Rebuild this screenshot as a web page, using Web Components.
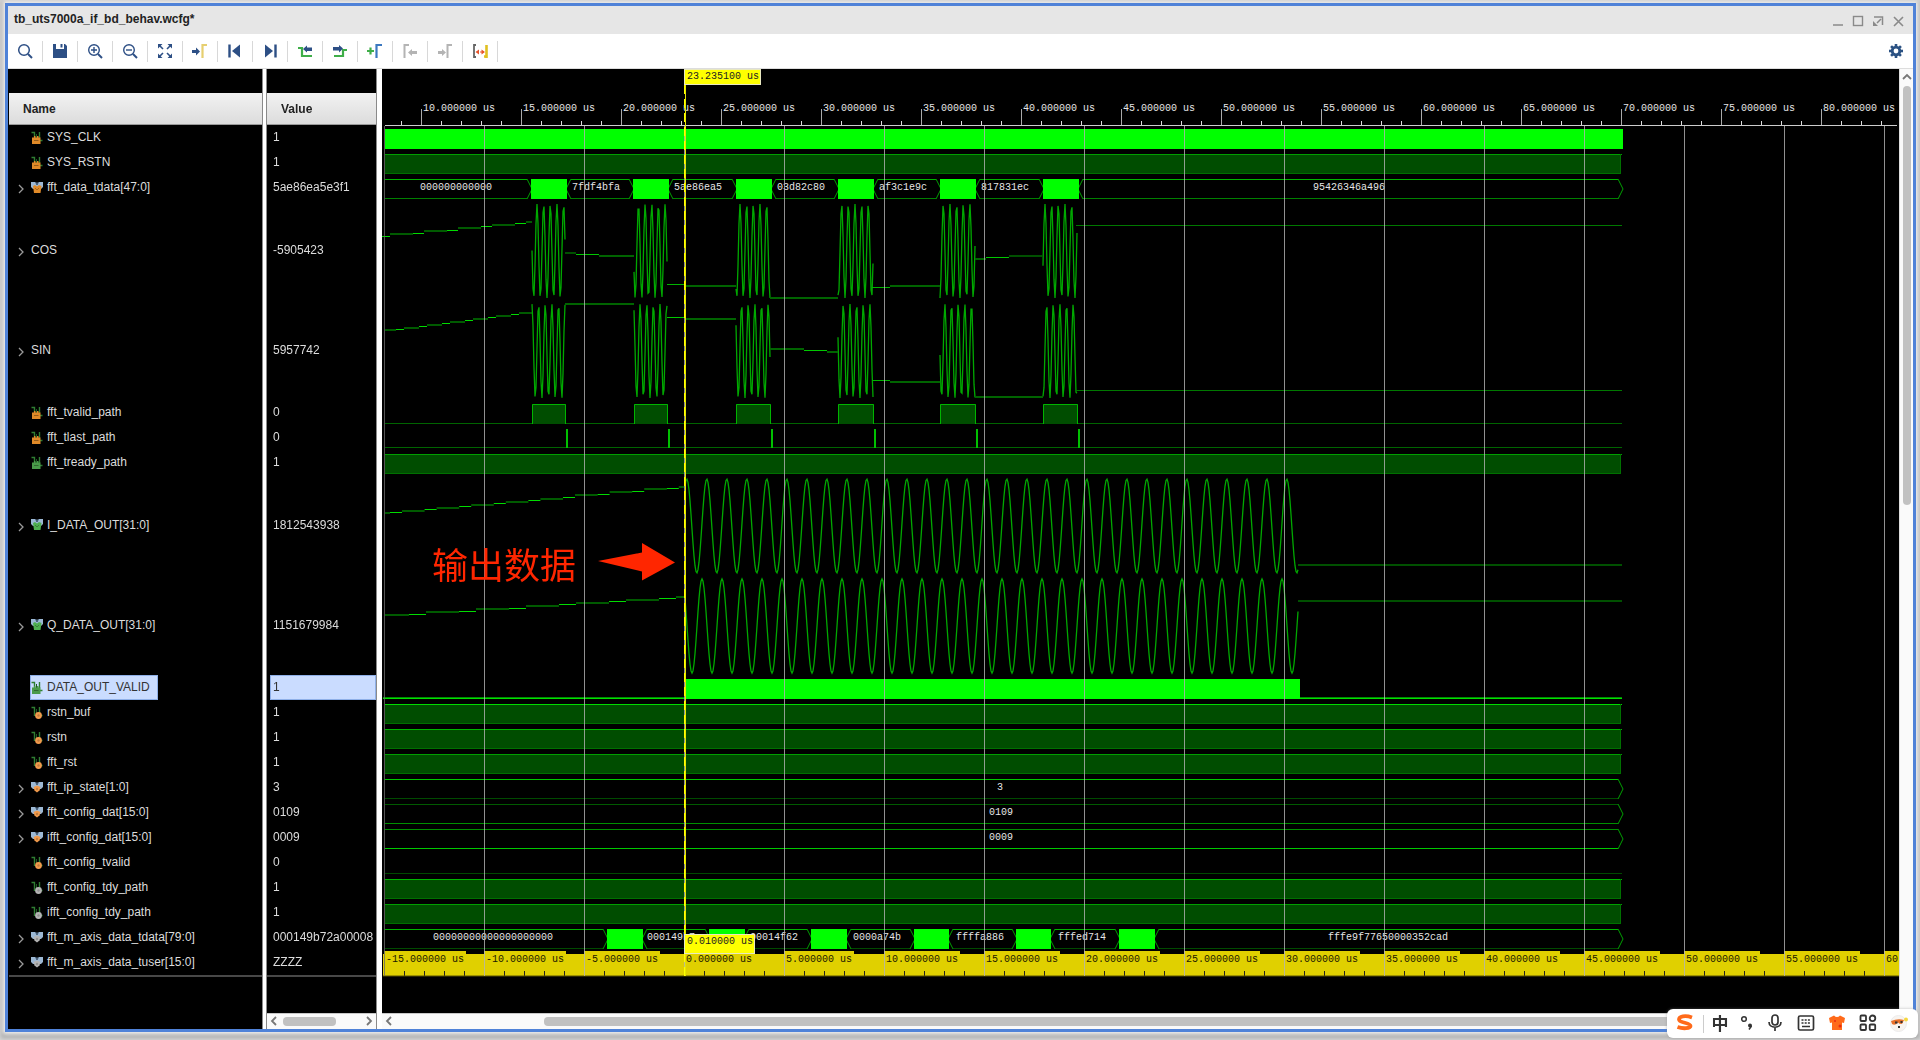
<!DOCTYPE html>
<html lang="en">
<head>
<meta charset="utf-8">
<title>tb_uts7000a_if_bd_behav.wcfg*</title>
<style>
html, body { height: 100%; margin: 0; }
body { background: #d4d4d4; font: 12px/16px "Liberation Sans", Arial, sans-serif; overflow: hidden; }
</style>
</head>
<body>
<wave-window caption="tb_uts7000a_if_bd_behav.wcfg*">
  <tool-bar slot="tools"></tool-bar>
  <signal-column slot="names" kind="name" heading="Name"></signal-column>
  <signal-column slot="values" kind="value" heading="Value"></signal-column>
  <wave-plot slot="plot"><span slot="note">输出数据</span></wave-plot>
</wave-window>
<ime-bar></ime-bar>

<script>
const SIGNALS = [
  { name: 'SYS_CLK', value: '1', icon: 's-lock', badge: '#e08a28', wave: 'clock' },
  { name: 'SYS_RSTN', value: '1', icon: 's-lock', badge: '#e08a28', wave: 'high', edge: '#00a000' },
  { name: 'fft_data_tdata[47:0]', value: '5ae86ea5e3f1', icon: 'b-lock', badge: '#e08a28', wave: 'bus',
    top: '#00b400', bottom: '#008000',
    blocks: [[531, 567], [633, 669], [736, 772], [838, 874], [940, 976], [1043, 1079]],
    labels: [[420, '000000000000'], [572, '7fdf4bfa'], [674, '5ae86ea5'], [777, '03d82c80'], [879, 'af3c1e9c'], [981, '817831ec'], [1313, '95426346a496']] },
  { name: 'COS', value: '-5905423', tall: true, wave: 'cos' },
  { name: 'SIN', value: '5957742', tall: true, wave: 'sin' },
  { name: 'fft_tvalid_path', value: '0', icon: 's-lock', badge: '#e08a28', wave: 'pulse' },
  { name: 'fft_tlast_path', value: '0', icon: 's-lock', badge: '#e08a28', wave: 'spike' },
  { name: 'fft_tready_path', value: '1', icon: 's-lock', badge: '#4a9a4a', wave: 'high', edge: '#00a000' },
  { name: 'I_DATA_OUT[31:0]', value: '1812543938', icon: 'b-lock', badge: '#4fae4f', tall: true, wave: 'idata' },
  { name: 'Q_DATA_OUT[31:0]', value: '1151679984', icon: 'b-lock', badge: '#4fae4f', tall: true, wave: 'qdata' },
  { name: 'DATA_OUT_VALID', value: '1', icon: 's-lock', badge: '#4a9a4a', selected: true, wave: 'valid' },
  { name: 'rstn_buf', value: '1', icon: 's-dot', badge: '#f09a4c', wave: 'high', edge: '#00dc00' },
  { name: 'rstn', value: '1', icon: 's-dot', badge: '#f09a4c', wave: 'high', edge: '#00b400' },
  { name: 'fft_rst', value: '1', icon: 's-dot', badge: '#f09a4c', wave: 'high', edge: '#00a000' },
  { name: 'fft_ip_state[1:0]', value: '3', icon: 'b-dot', badge: '#f09a4c', wave: 'bus', top: '#00c800', bottom: '#004a00', blocks: [], labels: [[997, '3']] },
  { name: 'fft_config_dat[15:0]', value: '0109', icon: 'b-dot', badge: '#f09a4c', wave: 'bus', top: '#005a00', bottom: '#009000', blocks: [], labels: [[989, '0109']] },
  { name: 'ifft_config_dat[15:0]', value: '0009', icon: 'b-dot', badge: '#f09a4c', wave: 'bus', top: '#009000', bottom: '#00c800', blocks: [], labels: [[989, '0009']] },
  { name: 'fft_config_tvalid', value: '0', icon: 's-dot', badge: '#f09a4c', wave: 'low' },
  { name: 'fft_config_tdy_path', value: '1', icon: 's-dot', badge: '#b4b4b4', wave: 'high', edge: '#00b400' },
  { name: 'ifft_config_tdy_path', value: '1', icon: 's-dot', badge: '#b4b4b4', wave: 'high', edge: '#00a000' },
  { name: 'fft_m_axis_data_tdata[79:0]', value: '000149b72a00008', icon: 'b-dot', badge: '#b4b4b4', wave: 'bus',
    top: '#00b400', bottom: '#004a00',
    blocks: [[607, 643], [709, 745], [811, 847], [914, 949], [1016, 1051], [1119, 1155]],
    labels: [[433, '00000000000000000000'], [647, '000149b7'], [750, '00014f62'], [853, '0000a74b'], [956, 'ffffa886'], [1058, 'fffed714'], [1328, 'fffe9f77650000352cad']] },
  { name: 'fft_m_axis_data_tuser[15:0]', value: 'ZZZZ', icon: 'b-dot', badge: '#b4b4b4' }
];

function define(tag, render) {
  customElements.define(tag, class extends HTMLElement {
    connectedCallback() {
      if (this.shadowRoot) return;
      this.attachShadow({ mode: 'open' }).innerHTML = render(this);
    }
  });
}

/* ---------- signal glyphs ---------- */
define('signal-icon', el => {
  const c = el.getAttribute('badge'), [type, mark] = el.getAttribute('kind').split('-');
  const base = type === 's'
    ? '<path d="M0.5 1.5H3.5V10M8.5 1V7M8.5 9.5H11.5" fill="none" stroke="#2f7d32" stroke-width="1.4"/><path d="M5.5 3V9" stroke="#1d5a20"/>'
    : '<path d="M0 1H5L6 3L7 1H12V6L10 8H2L0 6Z" fill="#9cb8d4"/><path d="M4.500 1L6 4L7.500 1" fill="none" stroke="#38506a"/>';
  const badge = mark === 'lock'
    ? (type === 's'
      ? `<path d="M1 6.500H3V5H4.500V6.500H6V5H7.500V6.500H9.500V13H1Z" fill="${c}"/><path d="M3 9.500H7.500" stroke="#0005"/>`
      : `<path d="M2 5L4 4L6 5.500L8 4L10.500 5L9.500 12H3Z" fill="${c}"/><path d="M4 7L6 9L8 7" fill="none" stroke="#0004"/>`)
    : (type === 's'
      ? `<circle cx="7.500" cy="9.500" r="3.400" fill="${c}"/><circle cx="7.500" cy="9.500" r="1.200" fill="#0003"/>`
      : `<path d="M2.500 6L6 4.500L9.500 6L8.500 9.500L6 11.500L3.500 9.500Z" fill="${c}"/><circle cx="6" cy="8" r="1.200" fill="#0003"/>`);
  return `<style>:host{display:block;flex:none;width:12px;height:13px}svg{display:block}</style>
  <svg width="12" height="13" viewBox="0 0 12 13">${base}${badge}</svg>`;
});

/* ---------- one column of the signal list ---------- */
define('signal-column', el => {
  const isName = el.getAttribute('kind') === 'name';
  const rows = SIGNALS.map(s => {
    const cls = (s.tall ? 'tall ' : '') + (s.selected ? 'sel' : '');
    if (!isName) return `<tr class="${cls}"><td><div class="val">${s.value}</div></td></tr>`;
    const arrow = s.name.includes('[') || !s.icon
      ? '<button class="exp" aria-label="Expand"><svg width="6" height="10" viewBox="0 0 6 10"><path d="M1 1L5 5L1 9" fill="none" stroke="#9a9a9a" stroke-width="1.300"/></svg></button>'
      : '<span class="exp"></span>';
    const icon = s.icon ? `<signal-icon kind="${s.icon}" badge="${s.badge}"></signal-icon>` : '';
    return `<tr class="${cls}"><td><div class="line">${arrow}<span class="tag">${icon}<span>${s.name}</span></span></div></td></tr>`;
  }).join('');
  const foot = isName ? '' : '<scroll-strip kind="value"></scroll-strip>';
  return `<style>
  :host{display:flex;flex-direction:column;box-sizing:border-box;background:#000;color:#dcdcdc;min-height:0;overflow:hidden;height:100%;
    border-left:1px solid ${isName ? '#000' : '#8a8a8a'};border-right:1px solid #8a8a8a}
  table{border-collapse:separate;border-spacing:0;width:100%;table-layout:fixed;margin-top:24px;border-bottom:2px solid #484848}
  th{height:32px;padding:0 0 0 14px;box-sizing:border-box;text-align:left;font-weight:bold;color:#222;
    background:linear-gradient(#f2f2f2,#dcdcdc);border-bottom:1px solid #999}
  td{height:25px;padding:0;overflow:hidden}
  .tall td{height:100px}
  .line{display:flex;align-items:center;height:25px;white-space:nowrap}
  .exp{flex:none;width:21px;height:16px;padding:0 0 0 9px;border:0;background:none;box-sizing:border-box}
  .exp svg{display:block;margin-top:3px}
  .tag{display:flex;align-items:center;gap:4px;height:25px;box-sizing:border-box;padding:0 8px 1px 1px}
  .val{height:25px;line-height:24px;margin-left:3px;padding-left:3px;box-sizing:border-box;white-space:nowrap;overflow:hidden}
  .sel .tag,.sel .val{background:#cadcff;color:#333;box-shadow:inset 0 0 0 1px #8fb0e8}
  .space{flex:1}
  </style>
  <table><thead><tr><th>${el.getAttribute('heading')}</th></tr></thead><tbody>${rows}</tbody></table>
  <div class="space"></div>${foot}`;
});

/* ---------- scroll strips ---------- */
define('scroll-strip', el => {
  const k = el.getAttribute('kind');
  const vertical = k === 'plot-y';
  const chev = d => `<button aria-label="Scroll"><svg width="10" height="10" viewBox="0 0 10 10"><path d="${d}" fill="none" stroke="#777" stroke-width="1.800"/></svg></button>`;
  const a = vertical ? chev('M1 7L5 3L9 7') : chev('M7 1L3 5L7 9');
  const b = vertical ? chev('M1 3L5 7L9 3') : chev('M3 1L7 5L3 9');
  const thumb = { 'value': 'margin-left:2px;width:53px;flex:none', 'plot-x': 'margin-left:148px;flex:1', 'plot-y': 'margin-top:2px;height:45%;flex:none' }[k];
  return `<style>
  :host{display:flex;flex:none;background:#fafafa;${vertical ? 'flex-direction:column;width:13px;border-left:1px solid #ddd' : 'height:15px;border-top:1px solid #c8c8c8'}}
  button{border:0;background:none;padding:0;flex:none;width:${vertical ? 13 : 14}px;height:${vertical ? 15 : 14}px;display:grid;place-items:center}
  .track{flex:1;display:flex;${vertical ? 'flex-direction:column;' : 'padding-bottom:1px;'}align-items:center}
  .thumb{background:#c1c1c1;border-radius:4px;${vertical ? 'width:8px' : 'height:9px'};${thumb}}
  </style>${a}<div class="track"><div class="thumb"></div></div>${b}`;
});

/* ---------- toolbar ---------- */
define('tool-bar', () => {
  const B = '#2d4f85', icons = {
    Search: `<circle cx="8" cy="8" r="5.300" fill="none" stroke="${B}" stroke-width="1.500"/><path d="M12 12L16 16" stroke="${B}" stroke-width="2"/>`,
    Save: `<path d="M2 2H5V7H13V2H14L16 4V16H2Z" fill="${B}"/><path d="M9.500 2H11.500V5.500H9.500Z" fill="${B}"/>`,
    'Zoom In': `<circle cx="8" cy="8" r="5.300" fill="none" stroke="${B}" stroke-width="1.400"/><path d="M12 12L16 16" stroke="${B}" stroke-width="2"/><path d="M5 8H11M8 5V11" stroke="${B}" stroke-width="1.400"/>`,
    'Zoom Out': `<circle cx="8" cy="8" r="5.300" fill="none" stroke="${B}" stroke-width="1.400"/><path d="M12 12L16 16" stroke="${B}" stroke-width="2"/><path d="M5 8H11" stroke="${B}" stroke-width="1.400"/>`,
    'Zoom Fit': `<path d="M2 2H6.500L2 6.500ZM16 2H11.500L16 6.500ZM2 16H6.500L2 11.500ZM16 16H11.500L16 11.500Z" fill="${B}"/><path d="M3 3L7 7M15 3L11 7M3 15L7 11M15 15L11 11" stroke="${B}" stroke-width="1.600"/>`,
    'Go to Cursor': `<path d="M1 8H5V5.500L9 9.500L5 13.500V11H1Z" fill="${B}"/><path d="M11.500 16V3H16" fill="none" stroke="#e6cf70" stroke-width="2.200"/>`,
    'Go to Start': `<path d="M3.500 2.500V15.500" stroke="${B}" stroke-width="2.400"/><path d="M14 2.500V15.500L6 9Z" fill="${B}"/>`,
    'Go to End': `<path d="M14.500 2.500V15.500" stroke="${B}" stroke-width="2.400"/><path d="M4 2.500V15.500L12 9Z" fill="${B}"/>`,
    'Previous Transition': `<path d="M2 6H6V14H16" fill="none" stroke="#3fae49" stroke-width="2.200"/><path d="M7 7L11 3.500V5.500H16V9H11V10.500Z" fill="${B}"/>`,
    'Next Transition': `<path d="M3 14H12V8H16" fill="none" stroke="#3fae49" stroke-width="2.200"/><path d="M12 6.500L8 3V5H2V8.500H8V10.500Z" fill="${B}"/>`,
    'Add Marker': `<path d="M1 9H8M4.500 5.500V12.500" stroke="#3fae49" stroke-width="2.200"/><path d="M10.500 16V3H16" fill="none" stroke="#3b78c0" stroke-width="2.200"/>`,
    'Previous Marker': `<path d="M3.500 16V3H8" fill="none" stroke="#b4b4b4" stroke-width="2"/><path d="M7 10.500L11 7V9H16V12H11V14Z" fill="#b4b4b4"/>`,
    'Next Marker': `<path d="M11.500 16V3H16" fill="none" stroke="#b4b4b4" stroke-width="2"/><path d="M10 10.500L6 7V9H2V12H6V14Z" fill="#b4b4b4"/>`,
    'Swap Cursors': `<path d="M5 3H3V15H5" fill="none" stroke="#666" stroke-width="1.800"/><path d="M15.500 3V16M13 14.500H16" fill="none" stroke="#e0c020" stroke-width="2.600"/><path d="M4.500 10L8 7.500V12.500ZM14 10L10.500 7.500V12.500Z" fill="#e8552a"/><path d="M6 10H13" stroke="#e8552a" stroke-dasharray="2 1"/>`
  };
  let teeth = '';
  for (let i = 0; i < 8; i++) teeth += `<path d="M9 2V5" stroke="#2b5283" stroke-width="2.600" transform="rotate(${i * 45} 9 9)"/>`;
  return `<style>
  :host{display:flex;align-items:center;height:35px;background:#fff;border-bottom:1px solid #ddd;box-sizing:border-box}
  button{border:0;background:none;padding:0;width:35px;height:21px;box-sizing:border-box;border-right:1px solid #d8d8d8;display:grid;place-items:center}
  .gear{margin-left:auto;border:0;width:34px}
  svg{display:block}
  </style>${Object.entries(icons).map(([n, p]) => `<button aria-label="${n}"><svg width="18" height="18" viewBox="0 0 18 18">${p}</svg></button>`).join('')}
  <button class="gear" aria-label="Settings"><svg width="18" height="18" viewBox="0 0 18 18"><circle cx="9" cy="9" r="3.800" fill="none" stroke="#2b5283" stroke-width="2.800"/>${teeth}</svg></button>`;
});

/* ---------- waveform drawing ---------- */
const LEFT = 385, RIGHT = 1622, PULSES = [[532, 566], [634, 668], [736, 771], [838, 874], [940, 976], [1043, 1078]];
const hl = (x0, x1, y, c = '#007800', w = 1) => `<path d="M${x0} ${y}H${x1}" stroke="${c}" stroke-width="${w}"/>`;
/* slow slope drawn as alternating bright and dim stairs */
function ramp(x0, y0, x1, y1, first, period, len) {
  const at = x => Math.round(y0 + (y1 - y0) * (x - x0) / (x1 - x0)) + 0.5;
  let s = '', x = x0;
  for (let b = first; x < x1; b += period) {
    const d = Math.min(b, x1);
    if (d > x) s += hl(x, d, at((x + d) / 2) - 0.5, '#005a00', 2);
    if (b < x1) s += hl(b, Math.min(b + len, x1), at(b + len / 2), '#00dc00');
    x = b + len;
  }
  return s;
}
function sine(x0, x1, peak, period, c = '#00a800', step = 1) {
  let d = '';
  for (let x = x0; x <= x1; x += step)
    d += `${d ? 'L' : 'M'}${x} ${(51 - 47 * Math.cos(2 * Math.PI * (x - peak) / period)).toFixed(1)}`;
  return `<path d="${d}" fill="none" stroke="${c}" stroke-width="1.300"/>`;
}
const PEAKS = [537, 638.5, 740, 841.7, 943.3, 1045];
const bursts = shift => PULSES.map(([a, b], i) => sine(a, b - 1, PEAKS[i] + shift, 6.65)).join('');
function bus(s) {
  const cuts = [LEFT, ...s.blocks.flat(), RIGHT];
  let o = '';
  for (let i = 0; i < cuts.length; i += 2) {
    const a = cuts[i], b = cuts[i + 1], l = a === LEFT ? a : a + 4;
    o += hl(l, b - 4, 4.5, s.top) + hl(l, b - 4, 23.5, s.bottom);
    if (a !== LEFT) o += `<path d="M${l} 4L${a - 1} 14L${l} 24" fill="none" stroke="#00a000"/>`;
    o += `<path d="M${b - 4} 4L${b + 1} 14L${b - 4} 24" fill="none" stroke="#00a000"/>`;
  }
  for (const [a, b] of s.blocks) o += `<rect x="${a}" y="4" width="${b - a}" height="20" fill="#0f0"/>`;
  return o + s.labels.map(([x, t]) => `<text x="${x}" y="15">${t}</text>`).join('');
}
const WAVES = {
  clock: () => `<rect x="385" y="4" width="1238" height="20" fill="#0f0"/>`,
  high: s => `<rect x="385" y="4" width="1236" height="20" fill="#004d00"/>` + hl(385, RIGHT, 4.5, s.edge, 1) + hl(385, 1621, 23.5, '#007000') + `<path d="M1620.500 4V24" stroke="#007000"/>`,
  low: () => hl(385, RIGHT, 23.5, '#004a00'),
  bus,
  cos: () => ramp(385, 36, 532, 22, 379, 34, 11) + bursts(0) +
    hl(565, 576, 53, '#005000', 2) + hl(576, 599, 54.5, '#00c800') + hl(599, 634, 56, '#006400', 2) +
    hl(667, 685, 84.5, '#00b400') + hl(685, 736, 86, '#006400', 2) + hl(770, 838, 98, '#006400', 2) +
    hl(872, 890, 87.5, '#00b400') + hl(890, 940, 86, '#006400', 2) +
    hl(975, 986, 59, '#006400', 2) + hl(986, 1009, 57.5, '#00c800') + hl(1009, 1043, 56, '#005000', 2) + hl(1076, RIGHT, 25.5),
  sin: () => ramp(385, 31, 532, 12, 396, 23, 8) + bursts(1.6) +
    hl(565, 634, 4, '#006400', 2) + hl(667, 685, 17.5, '#00c800') + hl(685, 736, 19, '#006400', 2) +
    hl(770, 804, 49, '#006400', 2) + hl(804, 827, 50.5, '#00c800') + hl(827, 838, 52, '#006400', 2) +
    hl(872, 890, 80.5, '#00b400') + hl(890, 940, 82, '#006400', 2) + hl(975, 1043, 97, '#006400', 2) + hl(1076, RIGHT, 90.5),
  pulse: () => hl(385, RIGHT, 23.5, '#006400') + PULSES.map(([a, b]) => `<rect x="${a}" y="4" width="${b - a}" height="20" fill="#004d00"/><path d="M${a + .5} 24V4.500H${b - .5}V24" fill="none" stroke="#00b400"/>`).join(''),
  spike: () => hl(385, RIGHT, 22.5, '#006400') + PULSES.map(([, b]) => `<rect x="${b}" y="4" width="2" height="19" fill="#00c000"/>`).join(''),
  idata: () => ramp(385, 38, 684, 12, 390, 34.6, 12) + sine(685, 1298, 686.8, 20) + hl(1298, RIGHT, 90, '#005000', 2),
  qdata: () => ramp(385, 41, 684, 22, 409, 50, 17) + sine(685, 1298, 702, 20) + hl(1298, RIGHT, 26, '#005000', 2),
  valid: () => hl(383, RIGHT, 23, '#008c00', 2) + hl(383, RIGHT, 23.5, '#00e000') + `<rect x="685" y="4" width="615" height="20" fill="#0f0"/>`
};
const SVG_CSS = `:host{display:block}svg{display:block;width:100%;overflow:hidden}text{font:10px "Liberation Mono",monospace;fill:#e6e6e6;white-space:pre}`;

define('wave-row', el => {
  const s = SIGNALS[+el.getAttribute('index')];
  return `<style>${SVG_CSS}</style><svg height="${s.tall ? 100 : 25}"><g transform="translate(-382 0)">${WAVES[s.wave](s)}</g></svg>`;
});

define('time-ruler', el => {
  const relative = el.hasAttribute('relative');
  const from = relative ? -15 : 10, x0 = relative ? 384 : 421;
  let o = '';
  for (let t = from - (relative ? 0 : 5); x0 + (t - from) * 20 < 1898; t++) {
    const x = x0 + (t - from) * 20, major = t % 5 === 0;
    if (x < 384 || x > 1895 && !relative) continue;
    if (relative) {
      const text = t.toFixed(6) + ' us';
      if (major) o += `<rect x="${x}" y="1" width="${text.length * 6 + 4}" height="4" fill="#e0d000"/><text x="${x + 2}" y="12" class="dark">${text}</text>`;
      else o += `<path d="M${x + .5} 21V26" stroke="#222"/>`;
    } else {
      if (major) o += `<text x="${x + 2}" y="42">${t.toFixed(6)} us</text>`;
      o += `<path d="M${x + .5} ${major ? 40 : 52}V56" stroke="${major ? '#aaa' : '#ddd'}"/>`;
    }
  }
  const body = relative
    ? `<rect x="383" y="4" width="100%" height="22" fill="#e0d000"/>${o}<path d="M383 26H4000" stroke="#5a5200"/>`
    : `${o}<path d="M385 56.500H1897" stroke="#ccc"/>`;
  return `<style>${SVG_CSS} .dark{fill:#1a1800}</style><svg height="${relative ? 27 : 57}"><g transform="translate(-382 0)">${body}</g></svg>`;
});

define('wave-plot', () => {
  let grid = '';
  for (let x = 384, i = 0; x < 2400; x += 100, i++) grid += `<path d="M${x + .5} 57V907" stroke="${i ? '#b4b4b4' : '#6a6a6a'}" stroke-opacity=".8"/>`;
  return `<style>
  :host{display:flex;flex-direction:column;position:relative;flex:1;min-width:0;min-height:0;background:#000;overflow:hidden}
  time-ruler:first-of-type{margin-bottom:-1px}
  .space{flex:1}
  .over{position:absolute;left:0;top:0;width:100%;height:907px;pointer-events:none}
  .cur{position:absolute;left:302px;background:#ff0;color:#222;border:1px solid #e8e8c0;box-sizing:border-box;font:10px/13px "Liberation Mono",monospace;padding:0 2px;white-space:pre}
  .c1{top:0;width:77px;height:16px}
  .c2{top:865px;width:71px;height:20px}
  .note{position:absolute;left:50px;top:472px;font:36px/44px "Noto Sans CJK SC",sans-serif;color:#ff2600;white-space:nowrap}
  </style>
  <time-ruler></time-ruler>
  ${SIGNALS.map((s, i) => s.wave ? `<wave-row index="${i}"></wave-row>` : '').join('')}
  <time-ruler relative></time-ruler>
  <div class="space"></div>
  <scroll-strip kind="plot-x"></scroll-strip>
  <svg class="over"><g transform="translate(-382 0)">${grid}
    <path d="M685.500 16V907" stroke="#e6e600"/><path d="M684.500 16V907" stroke="#ff0" stroke-dasharray="9 5"/>
    <path d="M598 492L642 483.500V474L675 493.500L642 511.500V502.500Z" fill="#ff2600"/></g></svg>
  <div class="cur c1">23.235100 us</div><div class="cur c2">0.010000 us</div>
  <div class="note"><slot name="note"></slot></div>`;
});

/* ---------- window frame ---------- */
define('wave-window', el => `<style>
  :host{display:flex;flex-direction:column;position:fixed;inset:3px 4px 8px 5px;border:3px solid #4f82d8;background:#fff;box-shadow:0 0 4px 2px #f4f4f4,0 2px 4px 4px #aaa}
  header{display:flex;align-items:center;height:28px;background:#e6e6e6;padding:0 5px 0 6px;color:#222}
  h1{font:bold 12px/16px "Liberation Sans",Arial,sans-serif;margin:0;flex:1;padding-bottom:2px}
  header button{border:0;background:none;padding:2px 0 0;width:20px;height:20px;display:grid;place-items:center}
  main{flex:1;display:flex;min-height:0;gap:3px}
  .names{width:255px;flex:none}.values{width:111px;flex:none}
  .plot{flex:1;min-width:0;display:flex;border-left:2px solid #fff}
  ::slotted(*){box-sizing:border-box}
  </style>
  <header><h1>${el.getAttribute('caption')}</h1>
    <button aria-label="Minimize"><svg width="12" height="12"><path d="M1 10H11" stroke="#8a8a8a" stroke-width="1.500"/></svg></button>
    <button aria-label="Maximize"><svg width="12" height="12"><rect x="1.500" y="1.500" width="9" height="9" fill="none" stroke="#8a8a8a" stroke-width="1.400"/></svg></button>
    <button aria-label="Float"><svg width="12" height="12"><path d="M2 2H10.500V10M9 4L5 8" fill="none" stroke="#8a8a8a" stroke-width="1.500"/><path d="M1 6V11H6Z" fill="#8a8a8a"/></svg></button>
    <button aria-label="Close"><svg width="12" height="12"><path d="M2 2L11 11M11 2L2 11" stroke="#8a8a8a" stroke-width="1.600"/></svg></button>
  </header>
  <slot name="tools"></slot>
  <main><div class="names"><slot name="names"></slot></div><div class="values"><slot name="values"></slot></div>
  <div class="plot"><slot name="plot"></slot><scroll-strip kind="plot-y"></scroll-strip></div></main>`);

/* ---------- input method bar ---------- */
define('ime-bar', () => {
  const items = {
    Sogou: '<path d="M17 4.500C10 2 4 3.500 4 6.500C4 10 15.500 9.500 15.500 13C15.500 15.500 8 16 2.500 14" fill="none" stroke="#ff6a1a" stroke-width="3.800"/>',
    Punctuation: '<circle cx="7" cy="6" r="2.300" fill="none" stroke="#333" stroke-width="1.500"/><circle cx="13" cy="12.500" r="2" fill="#333"/><path d="M14.500 13L12 16.500" stroke="#333" stroke-width="1.500"/>',
    Voice: '<rect x="7" y="2" width="6" height="10" rx="3" fill="none" stroke="#333" stroke-width="1.700"/><path d="M4 9C4 16 16 16 16 9M10 14V18" fill="none" stroke="#333" stroke-width="1.700"/>',
    Keyboard: '<rect x="2.500" y="3" width="15" height="14" rx="1.500" fill="none" stroke="#333" stroke-width="1.700"/><path d="M5.500 7H14.500M5.500 10H14.500" stroke="#333" stroke-width="1.500" stroke-dasharray="2 1.200"/><path d="M6 13.500H14" stroke="#333" stroke-width="1.500"/>',
    Skin: '<path d="M2 5L7 2.500Q10 5.500 13 2.500L18 5L17 10L15 9.500V17H5V9.500L3 10Z" fill="#ff6a1a"/><circle cx="13" cy="13" r="1.500" fill="#e82a10"/><circle cx="8" cy="8" r="1" fill="#e82a10"/>',
    Tools: '<g fill="none" stroke="#333" stroke-width="1.800"><rect x="2.500" y="2.500" width="5.500" height="5.500" rx="1"/><circle cx="14.500" cy="5.300" r="2.800"/><rect x="2.500" y="11.500" width="5.500" height="5.500" rx="1"/><rect x="11.700" y="11.500" width="5.500" height="5.500" rx="1"/></g>',
    Mascot: '<circle cx="9.500" cy="10.500" r="8" fill="#f8f4f0" stroke="#ececec"/><path d="M2 8Q9 5 15 7L13 11Q10 11 9 9.500Q6 13 3 11Z" fill="#e8702a"/><path d="M6 9.500H8.500M11.500 9H13.500M9 14H11" stroke="#333" stroke-width="1.800"/><circle cx="17" cy="6.500" r="2" fill="#f5d840"/>'
  };
  const btn = n => `<button class="${n.toLowerCase()}" aria-label="${n}"><svg width="20" height="20" viewBox="0 0 20 20">${items[n]}</svg></button>`;
  return `<style>
  :host{position:fixed;right:2px;bottom:2px;width:251px;height:29px;box-sizing:border-box;padding:0 2px;display:flex;align-items:center;background:#fff;border-radius:6px;box-shadow:0 0 3px #8888}
  button{border:0;background:none;padding:0 0 2px;width:31px;height:29px;display:grid;place-items:center;flex:none}
  .zh{font:bold 17px/27px "Noto Sans CJK SC",sans-serif;color:#333;width:28px}
  .punctuation{width:26px}
  .voice{width:30px}
  i{width:1px;height:18px;background:#ccc;flex:none;margin:0 2px 0 3px}
  </style>${btn('Sogou')}<i></i><button class="zh">中</button>${['Punctuation', 'Voice', 'Keyboard', 'Skin', 'Tools', 'Mascot'].map(btn).join('')}`;
});
</script>
</body>
</html>
